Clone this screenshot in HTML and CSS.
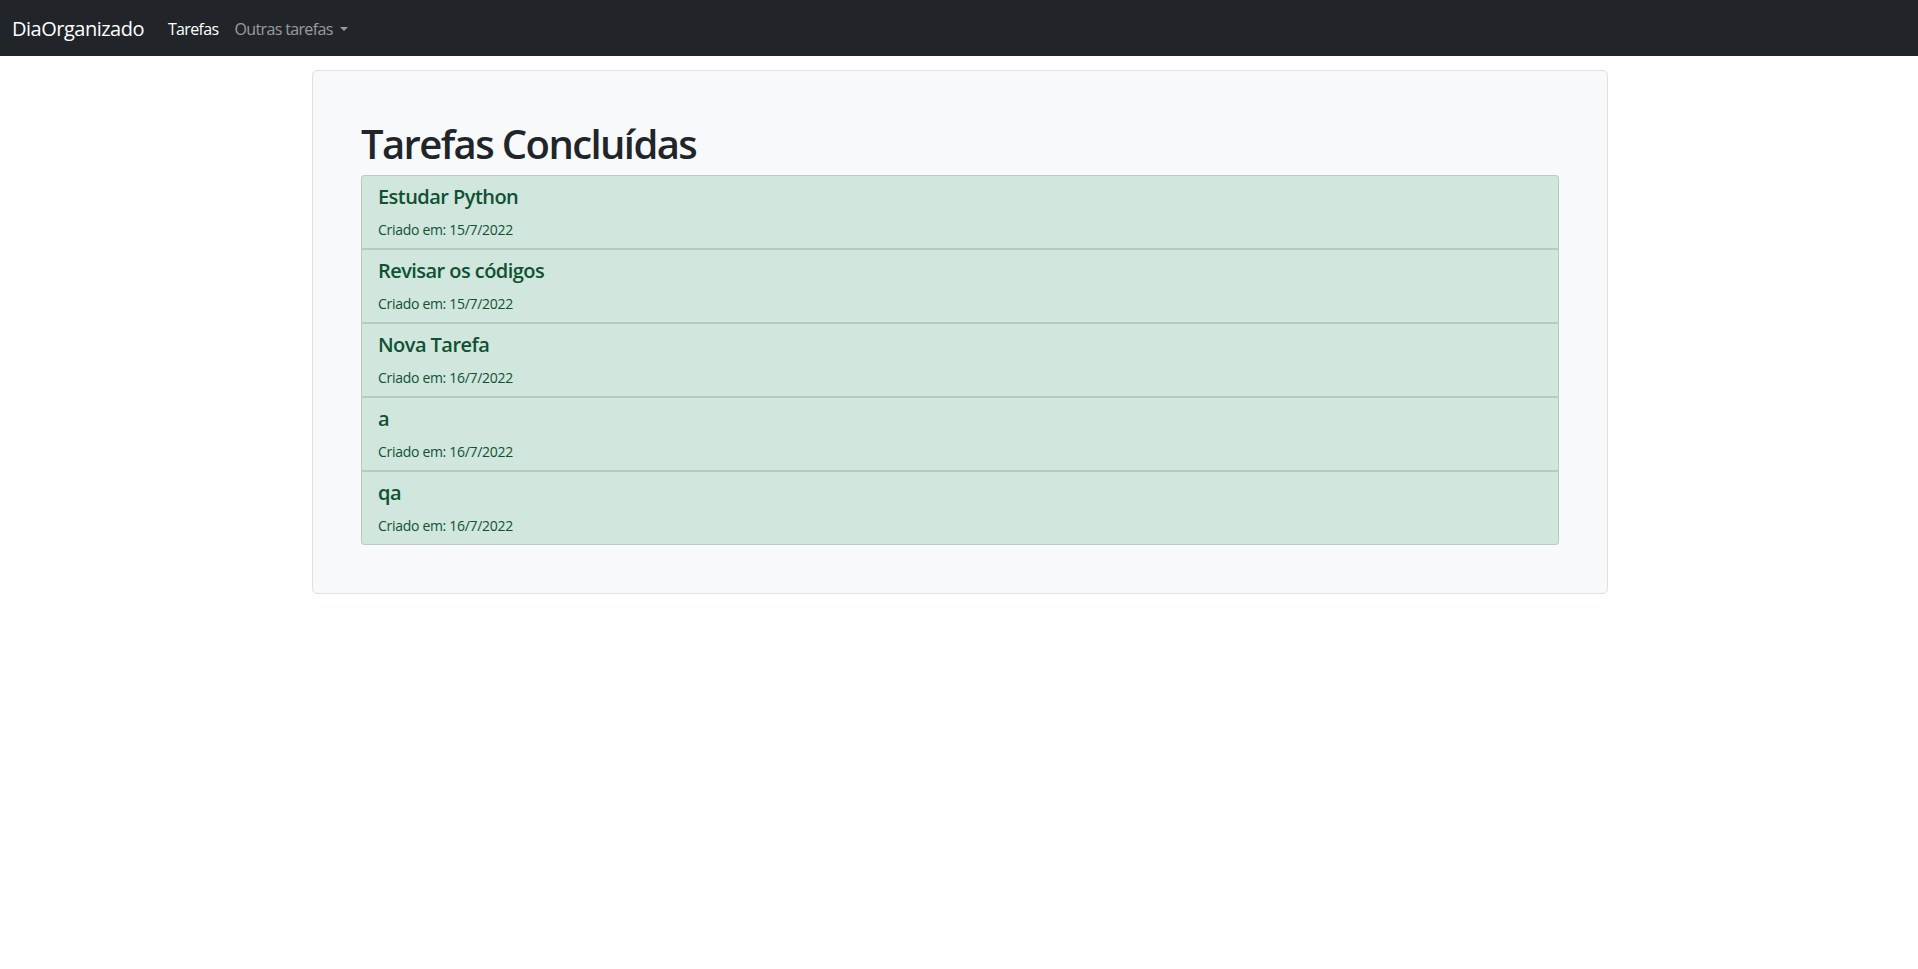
FILE: index.html
```html
<!DOCTYPE html>
<html lang="pt-BR">
<head>
<meta charset="utf-8">
<title>DiaOrganizado</title>
<link rel="stylesheet" href="styles.css">
</head>
<body>
<nav class="navbar">
  <a class="brand" href="#">DiaOrganizado</a>
  <ul class="nav">
    <li><a class="nav-link active" href="#">Tarefas</a></li>
    <li><a class="nav-link dropdown" href="#">Outras tarefas<span class="caret"></span></a></li>
  </ul>
</nav>
<main class="container">
  <section class="panel">
    <h1 class="heading">Tarefas Concluídas</h1>
    <ul class="task-list">
      <li class="task"><h5 class="task-title">Estudar Python</h5><p class="task-meta"><small>Criado em: 15/7/2022</small></p></li>
      <li class="task"><h5 class="task-title">Revisar os códigos</h5><p class="task-meta"><small>Criado em: 15/7/2022</small></p></li>
      <li class="task"><h5 class="task-title">Nova Tarefa</h5><p class="task-meta"><small>Criado em: 16/7/2022</small></p></li>
      <li class="task"><h5 class="task-title">a</h5><p class="task-meta"><small>Criado em: 16/7/2022</small></p></li>
      <li class="task"><h5 class="task-title">qa</h5><p class="task-meta"><small>Criado em: 16/7/2022</small></p></li>
    </ul>
  </section>
</main>
</body>
</html>
```
FILE: styles.css
```css
* { box-sizing: border-box; }
html, body { margin: 0; padding: 0; }
body {
  font-family: "Open Sans", "Noto Sans", sans-serif;
  font-size: 16px;
  line-height: 1.5;
  color: #212529;
  background: #fff;
}
a { text-decoration: none; }

.navbar {
  display: flex;
  align-items: center;
  height: 56px;
  padding: 9px 12px 7px;
  background: #212529;
}
.brand {
  font-size: 20px;
  line-height: 30px;
  padding: 5px 0;
  margin-right: 16px;
  color: #fff;
  letter-spacing: -0.5px;
}
.nav {
  display: flex;
  list-style: none;
  margin: 0;
  padding: 0;
}
.nav-link {
  display: flex;
  align-items: center;
  padding: 8px;
  font-size: 16px;
  line-height: 24px;
  color: rgba(255,255,255,.55);
  letter-spacing: -0.65px;
}
.nav-link.active { color: #fff; }
.caret {
  display: inline-block;
  margin-left: 7px;
  border-top: 4.8px solid rgba(255,255,255,.55);
  border-left: 4.8px solid transparent;
  border-right: 4.8px solid transparent;
}

.container {
  max-width: 1320px;
  margin: 14px auto 0;
  padding: 0 11px 0 13px;
}
.panel {
  background: #f8f9fa;
  border: 1px solid #dee2e6;
  border-radius: 5px;
  padding: 48px;
}
.heading {
  margin: 0 0 7px;
  padding-top: 1px;
  font-size: 40px;
  font-weight: 600;
  line-height: 48px;
  letter-spacing: -1.6px;
  color: #212529;
}
.task-list {
  list-style: none;
  margin: 0;
  padding: 0;
}
.task {
  background: #d1e7dd;
  color: #0f5132;
  border: 1px solid rgba(0,0,0,.125);
  padding: 9px 16px 7px;
}
.task:first-child { border-radius: 4px 4px 0 0; }
.task:last-child { border-radius: 0 0 4px 4px; }
.task-title {
  margin: 0 0 8px;
  font-size: 20px;
  font-weight: 600;
  line-height: 24px;
  letter-spacing: -0.55px;
}
.task-meta {
  margin: 0;
  line-height: 24px;
  height: 24px;
}
.task-meta small {
  font-size: 14px;
  line-height: 1;
  letter-spacing: -0.3px;
}
```
